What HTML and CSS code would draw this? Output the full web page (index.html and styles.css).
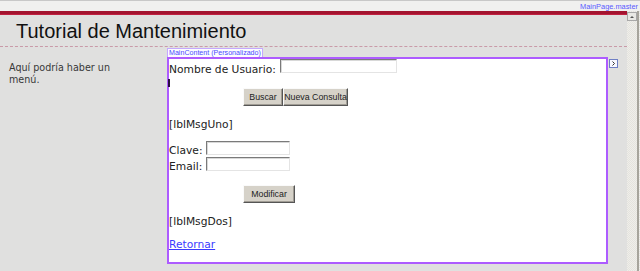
FILE: index.html
```html
<!DOCTYPE html>
<html lang="es">
<head>
<meta charset="utf-8">
<title>Tutorial de Mantenimiento</title>
<link rel="stylesheet" href="styles.css">
</head>
<body>
<div class="master-bar"><span class="master-name">MainPage.master</span></div>
<div class="frame">
  <div class="page">
    <div class="header">
      <h1 class="title">Tutorial de Mantenimiento</h1>
    </div>
    <div class="body-row">
      <div class="sidebar">
        <p class="menu-text">Aquí podría haber un menú.</p>
      </div>
      <div class="content-wrap">
        <div class="tab-row">
          <span class="region-tab">MainContent (Personalizado)</span>
        </div>
        <div class="region-row">
          <div class="region">
            <div class="row-user">
              <span class="lbl lbl-user">Nombre de Usuario:</span>
              <span class="textbox tb-user"></span>
            </div>
            <div class="caret-line"><span class="caret"></span></div>
            <div class="btn-row">
              <span class="btn btn-buscar">Buscar</span><span class="btn btn-nueva">Nueva Consulta</span>
            </div>
            <p class="msg msg-uno">[lblMsgUno]</p>
            <div class="form-grid">
              <span class="lbl lbl-field">Clave:</span>
              <span class="textbox tb-field"></span>
              <span class="lbl lbl-field lbl-email">Email:</span>
              <span class="textbox tb-field"></span>
            </div>
            <div class="btn-row btn-row-mod">
              <span class="btn btn-mod">Modificar</span>
            </div>
            <p class="msg msg-dos">[lblMsgDos]</p>
            <p class="msg msg-link"><a class="link" href="#">Retornar</a></p>
          </div>
          <span class="smart-tag"><svg class="smart-icon" width="7" height="7" viewBox="0 0 7 7"><path d="M2.5 1.5 L4.5 3.5 L2.5 5.5" fill="none" stroke="#333" stroke-width="1"/></svg></span>
        </div>
      </div>
    </div>
  </div>
  <div class="scrollbar">
    <div class="scroll-btn"><span class="scroll-arrow"></span></div>
    <div class="scroll-track"></div>
    <div class="scroll-edge"></div>
  </div>
</div>
</body>
</html>
```

FILE: styles.css
```css
html, body {
  margin: 0;
  padding: 0;
}
body {
  width: 640px;
  height: 271px;
  overflow: hidden;
  background: #e0e0df;
  font-family: "DejaVu Sans", Verdana, sans-serif;
  color: #222;
}
.master-bar {
  height: 11px;
  background: #f0f0ef;
  border-top: 1px solid #c8c8c8;
  box-sizing: border-box;
  display: flex;
  justify-content: flex-end;
  align-items: center;
}
.master-name {
  font-family: "Liberation Sans", Arial, sans-serif;
  font-size: 7.4px;
  line-height: 9px;
  color: #5a5aff;
  padding-right: 2px;
  padding-top: 1px;
}
.frame {
  display: flex;
  height: 260px;
}
.page {
  width: 627px;
  flex: none;
}
.header {
  border-top: 3px solid #a3142f;
  box-shadow: inset 0 1px 0 #c02040;
  padding: 6px 0 0 16px;
  height: 26px;
  border-bottom: 1px dashed #c99aa8;
}
.title {
  margin: 0;
  font-family: "Liberation Sans", Arial, sans-serif;
  font-weight: normal;
  font-size: 20px;
  line-height: 22px;
  color: #111;
}
.body-row {
  display: flex;
}
.sidebar {
  width: 167px;
  flex: none;
  padding: 15px 0 0 9px;
  box-sizing: border-box;
}
.menu-text {
  margin: 0;
  width: 112px;
  font-size: 9.6px;
  line-height: 12px;
  color: #383838;
}
.content-wrap {
  display: flex;
  flex-direction: column;
}
.tab-row {
  height: 9px;
  padding-top: 1px;
  display: flex;
}
.region-tab {
  font-family: "Liberation Sans", Arial, sans-serif;
  font-size: 7.1px;
  line-height: 8px;
  color: #4a4aff;
  background: #fbfbff;
  border: 1px solid #c4a8ff;
  border-bottom: none;
  padding: 0 1px;
}
.region-row {
  display: flex;
  align-items: flex-start;
}
.region {
  width: 437px;
  height: 203px;
  border: 2px solid #ad5cff;
  background: #fff;
}
.smart-tag {
  display: flex;
  width: 7px;
  height: 7px;
  margin-top: 2px;
  margin-left: 1px;
  border: 1px solid #6f7fc4;
  background: #f8f8ff;
}
.lbl {
  font-size: 10.7px;
  line-height: 13px;
  white-space: nowrap;
}
.row-user {
  display: flex;
  align-items: flex-start;
  height: 20px;
}
.lbl-user {
  margin-top: 4px;
}
.textbox {
  display: block;
  box-sizing: border-box;
  height: 14px;
  background: #fff;
  border-top: 1px solid #7a7a7a;
  border-left: 1px solid #7a7a7a;
  border-right: 1px solid #e4e4e4;
  border-bottom: 1px solid #e4e4e4;
  box-shadow: inset 1px 1px 0 #d8d8d8;
}
.tb-user {
  width: 117px;
  margin-left: 4px;
}
.caret-line {
  height: 8px;
  margin-left: -1px;
}
.caret {
  display: block;
  width: 2px;
  height: 8px;
  background: #2a1040;
}
.btn-row {
  display: flex;
  padding-left: 74px;
  margin-top: 1px;
  height: 18px;
}
.btn {
  box-sizing: border-box;
  height: 18px;
  display: flex;
  align-items: center;
  justify-content: center;
  background: #d6d2c9;
  border-top: 1px solid #fafafa;
  border-left: 1px solid #fafafa;
  border-right: 1px solid #555;
  border-bottom: 1px solid #555;
  box-shadow: inset -1px -1px 0 #a09c94;
  font-family: "Liberation Sans", Arial, sans-serif;
  font-size: 8.8px;
  color: #222;
}
.btn-buscar {
  width: 40px;
}
.btn-nueva {
  width: 65px;
}
.btn-mod {
  width: 52px;
}
.msg {
  margin: 0;
  font-size: 10.7px;
  line-height: 13px;
}
.msg-uno {
  margin-top: 12px;
}
.form-grid {
  display: grid;
  grid-template-columns: 37px 84px;
  grid-auto-rows: 16px;
  margin-top: 10px;
}
.lbl-field {
  margin-top: 3px;
}
.tb-field {
  width: 84px;
}
.btn-row-mod {
  margin-top: 12px;
}
.msg-dos {
  margin-top: 12px;
}
.msg-link {
  margin-top: 10px;
}
.link {
  color: #3b3bff;
  text-decoration: underline;
}
.scrollbar {
  width: 13px;
  flex: none;
  display: flex;
  flex-direction: column;
  position: relative;
  background: repeating-conic-gradient(#efeeea 0 25%, #e4e3de 0 50%) 0 0 / 2px 2px;
}
.scroll-btn {
  width: 10px;
  height: 9px;
  box-sizing: border-box;
  margin-top: 1px;
  border: 1px solid #a8a8a8;
  background: #e8e8e4;
  display: flex;
  align-items: center;
  justify-content: center;
}
.scroll-arrow {
  width: 0;
  height: 0;
  border-left: 2px solid transparent;
  border-right: 2px solid transparent;
  border-bottom: 2px solid #555;
}
.scroll-track {
  flex: 1;
}
.scroll-edge {
  position: absolute;
  right: 1px;
  top: 0;
  bottom: 0;
  width: 2px;
  background: #a6a49c;
}
```
